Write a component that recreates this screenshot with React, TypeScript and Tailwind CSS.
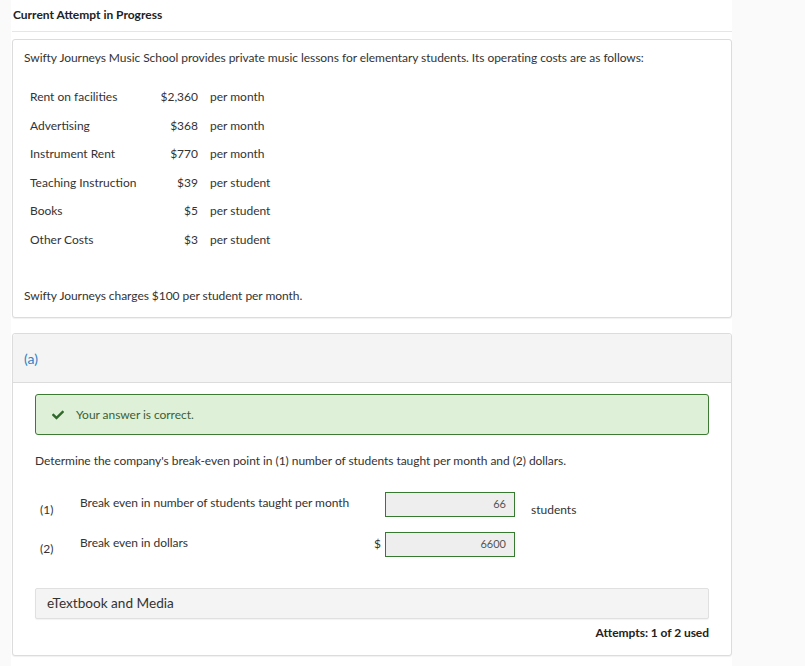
import React from "react";
import { FaCheck } from "react-icons/fa";

const rows = [
  ["Rent on facilities", "$2,360", "per month"],
  ["Advertising", "$368", "per month"],
  ["Instrument Rent", "$770", "per month"],
  ["Teaching Instruction", "$39", "per student"],
  ["Books", "$5", "per student"],
  ["Other Costs", "$3", "per student"],
];

export default function App() {
  return (
    <div className="min-h-[666px] w-[805px] bg-[#fafafa] text-[#333] font-['Lato',sans-serif]">
      <div className="ml-[11px] w-[721px] bg-white min-h-[666px] flex flex-col pb-[10px]">
        <div className="h-[32px] flex items-center px-[1px] border-b border-[#e6e6e6] ml-[1px]">
          <span className="text-[12px] font-bold text-[#222] leading-none mt-[-2px]">Current Attempt in Progress</span>
        </div>
        <div className="mt-[7px] ml-[1px] w-[720px] border border-[#dcdcdc] rounded-[3px] shadow-[0_1px_1px_rgba(0,0,0,0.06)] bg-white px-[11px] pt-[10px] pb-[13px]">
          <p className="text-[12px] leading-[16px] tracking-[-0.05px]">
            Swifty Journeys Music School provides private music lessons for elementary students. Its operating costs are as follows:
          </p>
          <table className="mt-[17px] ml-[6px] text-[12px] border-collapse">
            <tbody>
              {rows.map((r) => (
                <tr key={r[0]} className="h-[28.5px]">
                  <td className="w-[128px] align-middle">{r[0]}</td>
                  <td className="w-[40px] text-right align-middle">{r[1]}</td>
                  <td className="pl-[12px] align-middle">{r[2]}</td>
                </tr>
              ))}
            </tbody>
          </table>
          <p className="text-[12px] leading-[16px] mt-[34px] tracking-[-0.05px]">Swifty Journeys charges $100 per student per month.</p>
        </div>
        <div className="mt-[15px] ml-[1px] w-[720px] border border-[#dcdcdc] rounded-[3px] shadow-[0_1px_1px_rgba(0,0,0,0.06)] bg-white">
          <div className="h-[49px] bg-[#f4f4f4] border-b border-[#dcdcdc] flex items-center px-[11px] rounded-t-[3px]">
            <span className="text-[14px] text-[#2f80c2] mt-[1px]">(a)</span>
          </div>
          <div className="px-[22px] pt-[11px] pb-[14px]">
            <div className="h-[41px] bg-[#dff0d8] border border-[#3d7a34] rounded-[3px] flex items-center pl-[15px]">
              <FaCheck className="w-[14px] h-[12px] text-[#2f6a2b] mr-[11px]" />
              <span className="text-[12px] text-[#3c5f35] tracking-[-0.05px]">Your answer is correct.</span>
            </div>
            <p className="text-[12px] mt-[18px] leading-[16px] tracking-[-0.05px]">
              Determine the company's break-even point in (1) number of students taught per month and (2) dollars.
            </p>
            <div className="mt-[23px] flex flex-col gap-[15px]">
              <div className="flex items-start h-[25px]">
                <span className="w-[45px] pl-[5px] text-[12px] leading-[16px] mt-[10px]">(1)</span>
                <span className="w-[305px] text-[12px] leading-[16px] mt-[3px] tracking-[-0.05px]">Break even in number of students taught per month</span>
                <div className="w-[130px] h-[25px] bg-[#eeeeee] border border-[#357a2f] flex items-center justify-end pr-[8px] text-[11px] text-[#555]">66</div>
                <span className="ml-[16px] text-[12px] leading-[16px] mt-[10px]">students</span>
              </div>
              <div className="flex items-start h-[25px]">
                <span className="w-[45px] pl-[5px] text-[12px] leading-[16px] mt-[9px]">(2)</span>
                <span className="w-[294px] text-[12px] leading-[16px] mt-[3px] tracking-[-0.05px]">Break even in dollars</span>
                <span className="w-[11px] text-[12px] leading-[16px] mt-[4px]">$</span>
                <div className="w-[130px] h-[25px] bg-[#eeeeee] border border-[#357a2f] flex items-center justify-end pr-[8px] text-[11px] text-[#555]">6600</div>
              </div>
            </div>
            <div className="mt-[31px] h-[31px] bg-[#f4f4f4] border border-[#e0e0e0] rounded-[2px] shadow-[0_1px_1px_rgba(0,0,0,0.05)] flex items-center px-[11px]">
              <span className="text-[13.6px] text-[#333]">eTextbook and Media</span>
            </div>
            <div className="mt-[6px] text-right text-[12px] leading-[16px] font-bold text-[#222] tracking-[-0.05px]">Attempts: 1 of 2 used</div>
          </div>
        </div>
      </div>
    </div>
  );
}
